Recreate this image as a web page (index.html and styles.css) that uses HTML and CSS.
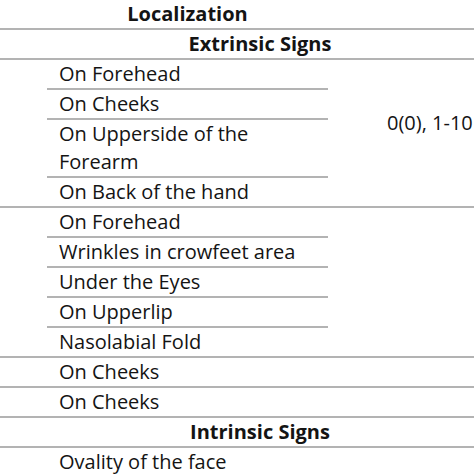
FILE: index.html
```html
<!DOCTYPE html>
<html>
<head>
<meta charset="utf-8">
<link rel="stylesheet" href="styles.css">
</head>
<body>
<table class="tbl">
  <colgroup><col class="c0"><col class="c1"><col class="c2"></colgroup>
  <tr>
    <td class="full"></td><th class="head full">Localization</th><td class="full"></td>
  </tr>
  <tr>
    <th colspan="3" class="sect full">Extrinsic Signs</th>
  </tr>
  <tr>
    <td rowspan="4" class="full"></td>
    <td class="item line">On Forehead</td>
    <td rowspan="4" class="val full">0(0), 1-10</td>
  </tr>
  <tr><td class="item line">On Cheeks</td></tr>
  <tr><td class="item line">On Upperside of the<br>Forearm</td></tr>
  <tr><td class="item full">On Back of the hand</td></tr>
  <tr>
    <td rowspan="5" class="full"></td>
    <td class="item line">On Forehead</td>
    <td rowspan="5" class="full"></td>
  </tr>
  <tr><td class="item line">Wrinkles in crowfeet area</td></tr>
  <tr><td class="item line">Under the Eyes</td></tr>
  <tr><td class="item line">On Upperlip</td></tr>
  <tr><td class="item full">Nasolabial Fold</td></tr>
  <tr><td class="full"></td><td class="item full">On Cheeks</td><td class="full"></td></tr>
  <tr><td class="full"></td><td class="item full">On Cheeks</td><td class="full"></td></tr>
  <tr>
    <th colspan="3" class="sect full">Intrinsic Signs</th>
  </tr>
  <tr><td></td><td class="item">Ovality of the face</td><td></td></tr>
</table>
</body>
</html>
```
FILE: styles.css
```css
html, body {
  margin: 0;
  padding: 0;
  background: #fff;
  overflow: hidden;
  width: 474px;
  height: 474px;
}
.tbl {
  border-collapse: separate;
  border-spacing: 0;
  table-layout: fixed;
  width: 520px;
  font-family: "Open Sans", "Noto Sans", sans-serif;
  font-size: 20px;
  color: #141414;
}
.c0 { width: 47px; }
.c1 { width: 281px; }
.c2 { width: 192px; }
td, th {
  padding: 0;
  line-height: 28px;
  vertical-align: top;
  white-space: nowrap;
}
.full { border-bottom: 2px solid #b3b3b3; }
.line { border-bottom: 2px solid #b3b3b3; }
.head, .sect {
  font-weight: 700;
  text-align: center;
}
.item {
  padding-left: 12px;
  text-align: left;
}
.val {
  padding-top: 49px;
  padding-left: 59px;
}
```
